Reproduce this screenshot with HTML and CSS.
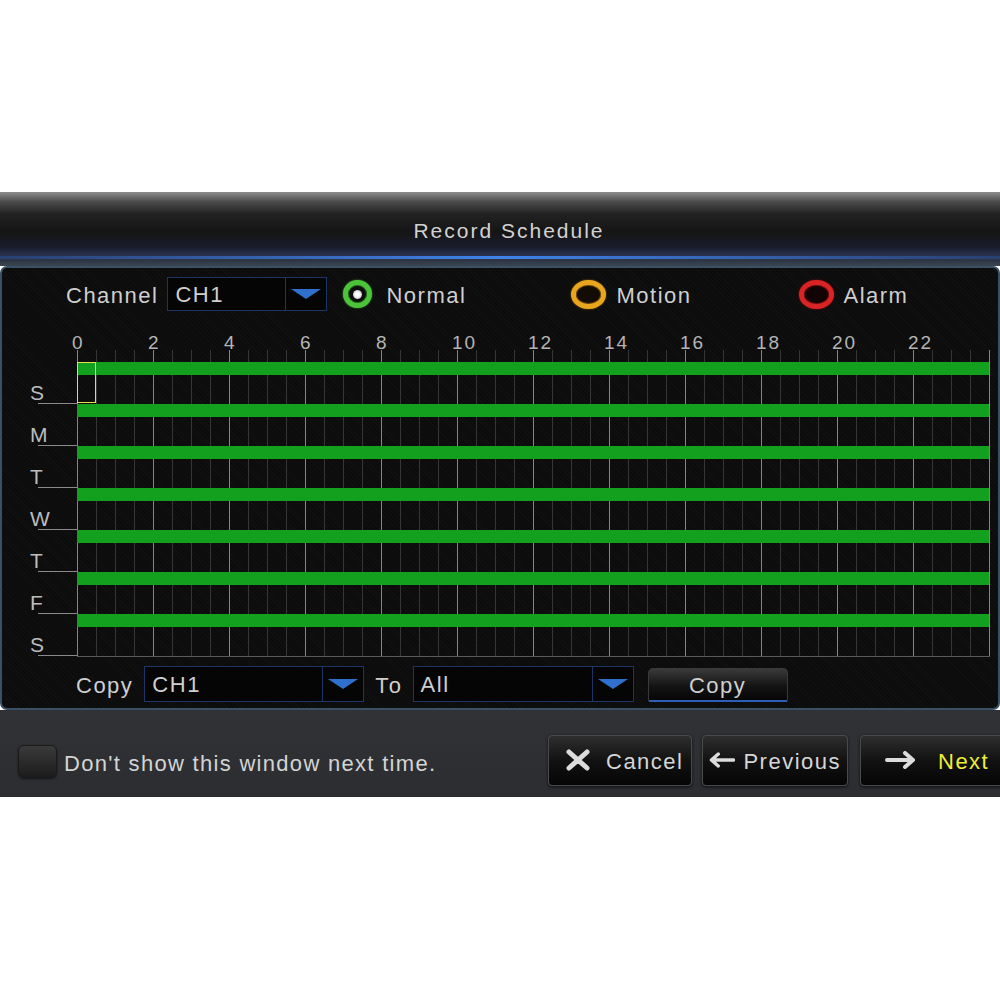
FILE: index.html
```html
<!DOCTYPE html>
<html lang="en">
<head>
    <meta charset="UTF-8">
    <meta name="viewport" content="width=device-width, initial-scale=1.0">
    <title>Record Schedule</title>
    <link rel="stylesheet" href="styles.css">
</head>
<body>
    <div class="screen">
        <div class="titlebar">Record Schedule</div>

        <div class="panel">
            <div class="toolbar">
                <span class="label">Channel</span>
                <div class="dropdown channel-select">
                    <span class="value">CH1</span>
                    <span class="arrow"><svg width="32" height="12" viewBox="0 0 32 12"><polygon points="1,1 31,1 16,11" fill="#2f70cc"/></svg></span>
                </div>
                <div class="legend normal"><span class="radio radio-green"><span class="dot"></span></span>Normal</div>
                <div class="legend motion"><span class="radio radio-orange"></span>Motion</div>
                <div class="legend alarm"><span class="radio radio-red"></span>Alarm</div>
            </div>

            <div class="schedule">
                <div class="days">
                    <div class="day">S</div>
                    <div class="day">M</div>
                    <div class="day">T</div>
                    <div class="day">W</div>
                    <div class="day">T</div>
                    <div class="day">F</div>
                    <div class="day">S</div>
                </div>
                <div class="chart">
                    <div class="hours">
                        <span>0</span><span>2</span><span>4</span><span>6</span>
                        <span>8</span><span>10</span><span>12</span><span>14</span>
                        <span>16</span><span>18</span><span>20</span><span>22</span>
                    </div>
                    <div class="ticks"></div>
                    <div class="grid">
                        <div class="row"><div class="bar"></div></div>
                        <div class="row"><div class="bar"></div></div>
                        <div class="row"><div class="bar"></div></div>
                        <div class="row"><div class="bar"></div></div>
                        <div class="row"><div class="bar"></div></div>
                        <div class="row"><div class="bar"></div></div>
                        <div class="row"><div class="bar"></div></div>
                        <div class="cursor"></div>
                    </div>
                </div>
            </div>

            <div class="copy-row">
                <span class="label">Copy</span>
                <div class="dropdown copy-from">
                    <span class="value">CH1</span>
                    <span class="arrow"><svg width="32" height="12" viewBox="0 0 32 12"><polygon points="1,1 31,1 16,11" fill="#2f70cc"/></svg></span>
                </div>
                <span class="label to">To</span>
                <div class="dropdown copy-to">
                    <span class="value">All</span>
                    <span class="arrow"><svg width="32" height="12" viewBox="0 0 32 12"><polygon points="1,1 31,1 16,11" fill="#2f70cc"/></svg></span>
                </div>
                <button class="copy-btn">Copy</button>
            </div>
        </div>

        <div class="footer">
            <span class="checkbox"></span>
            <span class="footer-text">Don't show this window next time.</span>
            <div class="buttons">
                <button class="btn cancel">
                    <svg width="26" height="22" viewBox="0 0 26 22"><path d="M4 3 L22 19 M22 3 L4 19" stroke="#dcdcdc" stroke-width="5" stroke-linecap="round"/></svg>
                    Cancel
                </button>
                <button class="btn previous">
                    <svg width="32" height="18" viewBox="0 0 32 18"><path d="M30 9 H5 M12 2 L4 9 L12 16" stroke="#dcdcdc" stroke-width="4" fill="none" stroke-linecap="round" stroke-linejoin="round"/></svg>
                    Previous
                </button>
                <button class="btn next">
                    <svg width="32" height="18" viewBox="0 0 32 18"><path d="M2 9 H27 M20 2 L28 9 L20 16" stroke="#dcdcdc" stroke-width="4" fill="none" stroke-linecap="round" stroke-linejoin="round"/></svg>
                    <span class="next-text">Next</span>
                </button>
            </div>
        </div>
    </div>
</body>
</html>
```

FILE: styles.css
```css
/* Page */
body {
    margin: 0;
    background: #fff;
    font-family: "Liberation Sans", Arial, sans-serif;
    color: #cfcfcf;
}

.screen {
    width: 1000px;
    margin-top: 192px;
    overflow: hidden;
}

/* Title bar with the blue glow line */
.titlebar {
    height: 74px;
    box-sizing: border-box;
    padding: 27px 0 0 18px;
    text-align: center;
    font-size: 21px;
    line-height: 24px;
    letter-spacing: 2px;
    color: #d2d2d2;
    background:
        linear-gradient(to right, rgba(40, 90, 190, 0.35), #3f82ea 50%, rgba(40, 90, 190, 0.35)) 0 64px / 100% 3px no-repeat,
        linear-gradient(#8e8e8e 0, #4a4a4a 10px, #222 22px, #151515 40px, #1a1c2c 55px, #26304a 62px, #2c3444 68px, #3b4652 74px);
}

/* Main panel */
.panel {
    height: 444px;
    box-sizing: border-box;
    border: 2px solid #3a5064;
    border-radius: 7px;
    background: #0c0c0c repeating-linear-gradient(45deg, rgba(255, 255, 255, 0.02) 0 1px, transparent 1px 3px);
}

.label {
    font-size: 22px;
    letter-spacing: 1.5px;
}

.dropdown {
    display: flex;
    box-sizing: border-box;
    height: 36px;
    border: 1px solid #1d3564;
    background: #050505;
}

.dropdown .value {
    flex: 1;
    padding: 2px 0 0 7px;
    font-size: 22px;
    letter-spacing: 1.5px;
    line-height: 32px;
}

.dropdown .arrow {
    width: 40px;
    border-left: 1px solid #1d3564;
    display: flex;
    align-items: center;
    justify-content: center;
}

/* Channel row */
.toolbar {
    display: flex;
    align-items: center;
    height: 34px;
    margin-top: 9px;
    padding-left: 64px;
}

.toolbar .label,
.legend {
    padding-top: 4px;
}

.channel-select {
    width: 160px;
    height: 34px;
    margin-left: 9px;
}

.channel-select .value {
    line-height: 30px;
}

.legend {
    display: flex;
    align-items: center;
    gap: 13px;
    font-size: 22px;
    letter-spacing: 1.5px;
}

.legend .radio {
    margin-top: -4px;
}

.legend.normal {
    margin-left: 16px;
    width: 228px;
    gap: 14px;
}

.legend.motion {
    width: 228px;
    gap: 10px;
}

.legend.alarm {
    gap: 9px;
}

/* Legend rings */
.radio {
    display: flex;
    align-items: center;
    justify-content: center;
    width: 29px;
    height: 28px;
    box-sizing: border-box;
    border-radius: 50%;
    border: 5px solid;
}

.motion .radio,
.alarm .radio {
    width: 35px;
    height: 29px;
}

.radio-green {
    border-color: #4cc43a;
    background: #0e0e0e;
    box-shadow: inset 0 0 0 1px #1f6a14, 0 0 2px #3a9a28;
}

.radio-green .dot {
    width: 9px;
    height: 9px;
    border-radius: 50%;
    background: radial-gradient(circle, #fff 0 2px, #d8d8d8 4px, #888 5px);
}

.radio-orange {
    border-color: #e8a51e;
    background: #120c04;
    box-shadow: inset 0 0 0 1px #6a4206, 0 0 2px #a06a10;
}

.radio-red {
    border-color: #d82424;
    background: #120404;
    box-shadow: inset 0 0 0 1px #6a0808, 0 0 2px #a01010;
}

/* Schedule chart */
.schedule {
    display: flex;
    margin-top: 20px;
    padding-left: 28px;
}

.days {
    width: 47px;
    margin-top: 31px;
}

.day {
    height: 42px;
    box-sizing: border-box;
    display: flex;
    align-items: flex-end;
    font-size: 21px;
    line-height: 22px;
    color: #bdbdbd;
    background: linear-gradient(#8a8a8a, #8a8a8a) right bottom / 39px 1px no-repeat;
}

.chart {
    width: 913px;
}

.hours {
    display: flex;
    height: 19px;
    padding-top: 2px;
    box-sizing: border-box;
    margin-left: -5px;
    font-size: 19px;
    line-height: 19px;
    letter-spacing: 2px;
    color: #b5b5b5;
}

.hours span {
    width: 76px;
}

.ticks,
.grid {
    background:
        repeating-linear-gradient(to right, #858585 0 1px, transparent 1px 76px),
        repeating-linear-gradient(to right, #363636 0 1px, transparent 1px 19px);
}

.ticks {
    height: 12px;
}

.grid {
    position: relative;
    border-bottom: 1px solid #5a5a5a;
}

.row {
    height: 42px;
}

.bar {
    width: 912px;
    height: 13px;
    background: #13a01f;
}

.cursor {
    position: absolute;
    left: 0;
    top: 0;
    width: 19px;
    height: 41px;
    box-sizing: border-box;
    border: 1.5px solid #e4e04a;
}

/* Copy row */
.copy-row {
    display: flex;
    align-items: center;
    margin-top: 9px;
    padding-left: 74px;
}

.copy-row .label {
    padding-top: 4px;
}

.copy-from {
    width: 220px;
    margin-left: 11px;
}

.label.to {
    margin-left: 11px;
    letter-spacing: 2.5px;
}

.copy-to {
    width: 221px;
    margin-left: 9px;
}

.copy-btn {
    width: 140px;
    height: 34px;
    margin-left: 14px;
    margin-top: 2px;
    padding: 3px 0 0;
    border: 1px solid #3a3a3a;
    border-bottom: 2px solid #2d5fb8;
    border-radius: 5px 5px 2px 2px;
    background: linear-gradient(#3a3a3a, #141414 55%, #060606);
    color: #cfcfcf;
    font-family: inherit;
    font-size: 22px;
    letter-spacing: 1.5px;
}

/* Footer */
.footer {
    display: flex;
    height: 87px;
    box-sizing: border-box;
    padding: 25px 0 0 18px;
    background: linear-gradient(#303236, #2b2d31);
}

.footer > * {
    flex-shrink: 0;
}

.checkbox {
    width: 39px;
    height: 33px;
    margin-top: 10px;
    box-sizing: border-box;
    border: 1px solid #1a1a1a;
    border-radius: 6px;
    background: linear-gradient(#3a3a3a, #1c1c1c);
    box-shadow: 0 1px 2px rgba(0, 0, 0, 0.6);
}

.footer-text {
    width: 484px;
    margin-left: 7px;
    margin-top: 16px;
    font-size: 22px;
    line-height: 26px;
    letter-spacing: 1.3px;
    color: #d4d4d4;
}

.buttons {
    display: flex;
}

.btn {
    display: flex;
    flex-shrink: 0;
    align-items: center;
    height: 51px;
    box-sizing: border-box;
    padding-top: 3px;
    border: 1px solid #4a4a4a;
    border-radius: 4px;
    background: linear-gradient(#2e2e2e, #121212 50%, #050505);
    color: #d6d6d6;
    font-family: inherit;
    font-size: 22px;
    letter-spacing: 1.5px;
    box-shadow: 0 1px 3px rgba(0, 0, 0, 0.7);
}

.btn svg {
    margin-top: -3px;
}

.cancel {
    width: 144px;
    padding-left: 16px;
    gap: 15px;
}

.previous {
    width: 146px;
    margin-left: 10px;
    padding-left: 5px;
    gap: 8px;
}

.next {
    width: 146px;
    margin-left: 12px;
    padding-left: 24px;
    gap: 21px;
}

.next-text {
    color: #eeee34;
}
```
